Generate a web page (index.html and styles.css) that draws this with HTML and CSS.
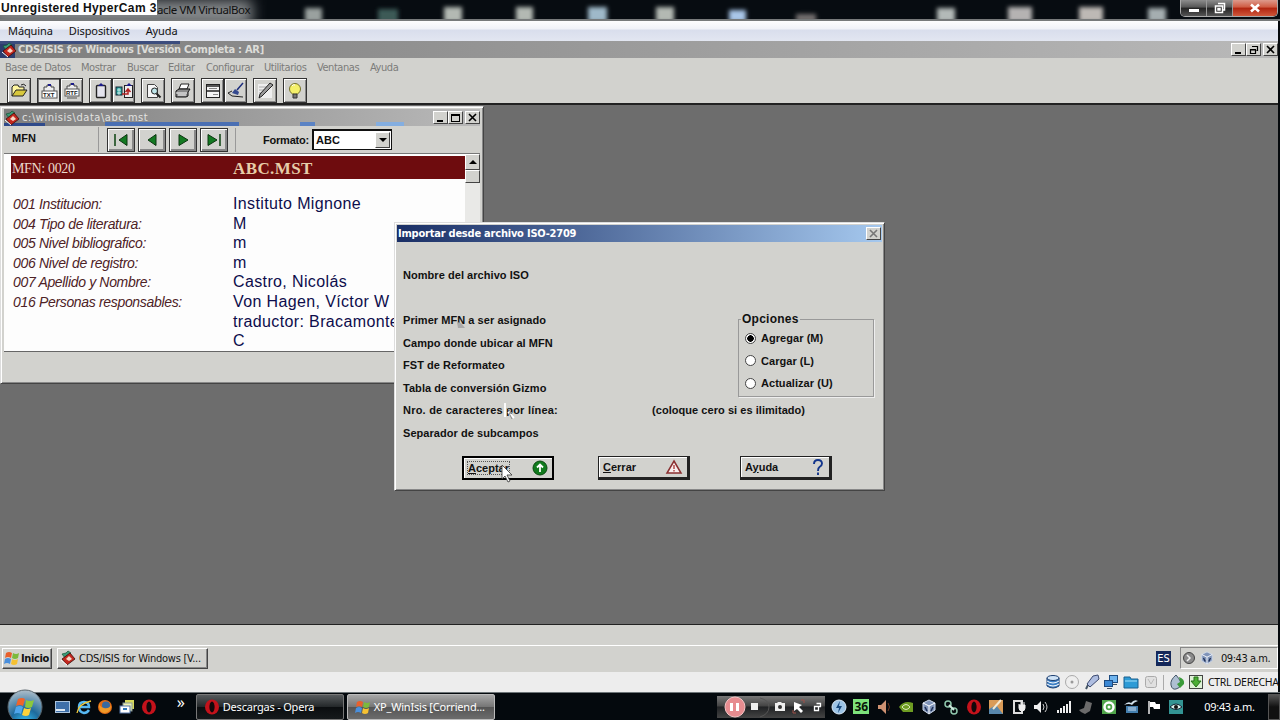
FILE: index.html
```
<!DOCTYPE html>
<html lang="es">
<head>
  <meta charset="UTF-8">
  <title>XP_WinIsis [Corriendo] - Oracle VM VirtualBox</title>
  <meta name="viewport" content="width=device-width, initial-scale=1.0">
  <link rel="stylesheet" href="styles.css">
</head>
<body>
  <!-- Shared icons -->
  <svg class="defs" width="0" height="0">
    <symbol id="isis" viewBox="0 0 16 16">
      <path d="M2 4l4-1 2-2 3 2-6 5z" fill="#3c9a78" stroke="#153" stroke-width=".7"/>
      <path d="M2 9l8-6 5 6-8 6z" fill="#c3281e" stroke="#3a0c0a" stroke-width=".8"/>
      <path d="M6 9l3-3 3 3-3 2z" fill="#f7d9c8"/>
      <path d="M1 10l6 5" fill="none" stroke="#fff"/>
    </symbol>
    <symbol id="flag" viewBox="0 0 16 16">
      <path d="M2 3q3-2 6 0L7 8Q4 6 1 8z" fill="#e8602c"/>
      <path d="M9 3q3 2 6 0l-1 5q-3 2-6 0z" fill="#7cba3c"/>
      <path d="M1 9q3-2 6 0l-1 5q-3-2-6 0z" fill="#4a8fdc"/>
      <path d="M8 9q3 2 6 0l-1 5q-3 2-6 0z" fill="#f5c132"/>
    </symbol>
    <symbol id="opera" viewBox="0 0 16 16">
      <ellipse cx="8" cy="8" rx="7" ry="7.5" fill="#c4121b"/>
      <ellipse cx="8" cy="8" rx="2.6" ry="5.4" fill="#12080a"/>
    </symbol>
    <symbol id="vbox" viewBox="0 0 16 16">
      <path d="M8 1l6 3v7l-6 4-6-4V4z" fill="#7f93b8" stroke="#cfd9ea"/>
      <path d="M2 4l6 3 6-3M8 7v8" fill="none" stroke="#fff"/>
      <path d="M4 8l2 4M12 8l-2 4" stroke="#1e2f55" stroke-width="1.5"/>
    </symbol>
    <symbol id="arrow" viewBox="0 0 12 19">
      <path d="M1 1v14l3-3 3 6 2-1-3-6h5z" fill="#fff" stroke="#333" stroke-width=".8"/>
    </symbol>
    <symbol id="cross" viewBox="0 0 9 9">
      <path d="M1 1l7 7M8 1L1 8" fill="none" stroke="currentColor" stroke-width="1.6"/>
    </symbol>
    <symbol id="restore" viewBox="0 0 10 10">
      <path d="M3.5 1.5h5v4h-1M3 1.5h6M1.5 4.5h5v4h-5zM1 5h6" fill="none" stroke="currentColor" stroke-width="1.2"/>
    </symbol>
  </svg>

  <div class="screen">
    <header class="host-title">
      <!-- desktop icons seen through the glass -->
      <svg class="glass" width="1280" height="20">
        <defs><filter id="soft" x="-50%" y="-50%" width="200%" height="200%"><feGaussianBlur stdDeviation="2"/></filter>
        <filter id="haze" x="-50%" y="-100%" width="200%" height="300%"><feGaussianBlur stdDeviation="7"/></filter></defs>
        <rect x="-10" y="0" width="262" height="26" fill="#85888a" filter="url(#haze)"/>
        <g filter="url(#soft)">
          <rect x="305" y="8" width="17" height="14" fill="#9aa19f"/>
          <rect x="378" y="9" width="20" height="14" fill="#3d5a57"/>
          <rect x="444" y="7" width="18" height="15" fill="#b3b9b3"/>
          <rect x="516" y="7" width="17" height="15" fill="#b3b9b3"/>
          <rect x="588" y="7" width="19" height="15" fill="#9fb9c9"/>
          <rect x="656" y="7" width="18" height="15" fill="#b3b9b3"/>
          <rect x="729" y="10" width="17" height="12" fill="#a9c6e8"/>
          <rect x="796" y="14" width="20" height="8" fill="#74706f"/>
          <rect x="937" y="8" width="18" height="14" fill="#b3bab8"/>
          <rect x="1008" y="7" width="24" height="15" fill="#b5b3b2"/>
          <rect x="1079" y="7" width="24" height="15" fill="#bdb9b5"/>
          <rect x="1148" y="8" width="18" height="14" fill="#a5aeb0"/>
        </g>
      </svg>
      <span class="hypercam">Unregistered HyperCam 3</span>
      <span class="host-name">acle VM VirtualBox</span>
      <div class="aero">
        <span class="aero-btn"><svg width="12" height="12"><path d="M1 7h10v3H1z" fill="#fff"/></svg></span>
        <span class="aero-btn"><svg width="12" height="12"><path d="M4 1.5h6.500v6.500H9M1.500 4h7v6.500h-7zM4 6.500h2v1.500H4z" fill="none" stroke="#fff" stroke-width="1.500"/></svg></span>
        <span class="aero-btn aero-close"><svg width="12" height="12"><path d="M2 2.500l8 7M10 2.500l-8 7" stroke="#fff" stroke-width="2.600"/></svg></span>
      </div>
    </header>

    <nav class="host-menu"><span>Máquina</span><span>Dispositivos</span><span>Ayuda</span></nav>

    <div class="vm">
      <div class="app-title">
        <svg width="16" height="16"><use href="#isis"/></svg>
        <span class="app-name">CDS/ISIS for Windows [Versión Completa : AR]</span>
        <div class="win-btns">
          <span class="wb"><i class="min"></i></span><span class="wb"><svg width="10" height="10"><use href="#restore"/></svg></span><span class="wb gap"><svg width="9" height="9"><use href="#cross"/></svg></span>
        </div>
      </div>
      <nav class="app-menu">
        <span class="m1">Base de Datos</span><span class="m2">Mostrar</span><span class="m3">Buscar</span><span class="m4">Editar</span><span class="m5">Configurar</span><span class="m6">Utilitarios</span><span class="m7">Ventanas</span><span class="m8">Ayuda</span>
      </nav>
      <div class="toolbar">
        <span class="tool">
          <svg width="18" height="18"><path d="M2 14V5l2-2h4l1 2h5v3" fill="#fff7a0" stroke="#222"/><path d="M2 14l4-6h11l-4 6z" fill="#d8c83c" stroke="#222"/><path d="M11 3q3-2 5 1" fill="none" stroke="#222"/></svg>
        </span>
        <div class="tool-group">
          <span class="tool on"><svg width="18" height="18"><path d="M4 9V5h3V3h4v2h3v4" fill="#eee" stroke="#444"/><rect x="8" y="2" width="3" height="2" fill="#1c1c8c"/><rect x="2" y="9" width="15" height="7" fill="#fff" stroke="#555"/><text x="3" y="15" class="tiny">TXT</text></svg></span>
          <span class="tool"><svg width="18" height="18"><path d="M4 7V4h3V2h4v2h3v3" fill="#eee" stroke="#444"/><rect x="8" y="1" width="3" height="2" fill="#1c1c8c"/><rect x="2" y="7" width="14" height="7" fill="#fff" stroke="#555"/><text x="3" y="13" class="tiny">RTF</text><path d="M4 16h10" stroke="#555"/></svg></span>
        </div>
        <div class="tool-group">
          <span class="tool"><svg width="18" height="18"><rect x="4.500" y="3.500" width="9" height="12" rx="1" fill="#e4e4ee" stroke="#222" stroke-width="1.400"/><path d="M6 4l3-3 3 3z" fill="#1c1c8c"/></svg></span>
          <span class="tool"><svg width="18" height="18"><rect x="9.500" y="3.500" width="8" height="12" fill="#eee" stroke="#222"/><path d="M11 4l3-3 3 3z" fill="#1c1c8c"/><rect x="1" y="5" width="6" height="8" fill="#2aa7a0" stroke="#123"/><path d="M2 8h4M2 11h4M4 6v7" stroke="#fff" stroke-width=".7"/><path d="M7 12h6V8M10.500 10l2.500-3 2.500 3" fill="none" stroke="#b02020" stroke-width="1.500"/></svg></span>
        </div>
        <span class="tool"><svg width="18" height="18"><path d="M3.500 2.500h7l3 3v10h-10z" fill="#f6f6f6" stroke="#444"/><circle cx="10.500" cy="9" r="3" fill="#bfe6ea" stroke="#222"/><path d="M12.500 11.500l4 4" stroke="#222" stroke-width="2"/></svg></span>
        <span class="tool"><svg width="18" height="18"><path d="M5 7l2-5h8l-2 5z" fill="#fff" stroke="#222"/><path d="M2 9l3-2h11l-2 3v4l-2 1H2z" fill="#8a8a8a" stroke="#111"/><path d="M2 11h11M4 13h8" stroke="#fff"/></svg></span>
        <div class="tool-group">
          <span class="tool"><svg width="18" height="18"><rect x="2.500" y="2.500" width="13" height="13" fill="#f4f4f4" stroke="#222"/><path d="M2 4h14M2 9h14" stroke="#222" stroke-width="1.500"/><path d="M5 6.500h8M9 12.500h5" stroke="#888"/></svg></span>
          <span class="tool"><svg width="18" height="18"><path d="M16 1l-6 7" stroke="#1c2c7c" stroke-width="1.500"/><path d="M8 7l4 3-1 3-6-2z" fill="#354a8e"/><path d="M1 11l4 3 11 1M1 11l4-2" fill="none" stroke="#222"/></svg></span>
        </div>
        <span class="tool"><svg width="18" height="18"><path d="M2 2h14v14H2z" fill="#eee"/><path d="M3 5h8M3 8h6M3 11h4" stroke="#aaa"/><path d="M3 16l1-4L14 1l3 2L6 14z" fill="#999" stroke="#222"/></svg></span>
        <span class="tool"><svg width="18" height="18"><circle cx="9" cy="7" r="5.500" fill="#f4f06a" stroke="#77742c"/><path d="M6 4q1-2 3-1" stroke="#fff" fill="none"/><path d="M7 12h4v4H7z" fill="#777" stroke="#333"/></svg></span>
      </div>

      <main class="workspace">
        <!-- Record window -->
        <section class="window record-win">
          <div class="record-title">
            <svg width="16" height="16"><use href="#isis"/></svg>
            <span>c:\winisis\data\abc.mst</span>
            <div class="win-btns">
              <span class="wb"><i class="min"></i></span><span class="wb"><i class="max"></i></span><span class="wb gap"><svg width="9" height="9"><use href="#cross"/></svg></span>
            </div>
          </div>
          <div class="record-bar">
            <span class="mfn">MFN</span>
            <div class="nav-btns">
              <span class="nav-btn"><svg width="16" height="14"><path d="M2 1v12" stroke="#174b1b" stroke-width="1.600"/><path d="M14 1.500v11L6 7z" fill="#137a22" stroke="#0c3510"/></svg></span>
              <span class="nav-btn"><svg width="16" height="14"><path d="M12 1.500v11L4 7z" fill="#137a22" stroke="#0c3510"/></svg></span>
              <span class="nav-btn"><svg width="16" height="14"><path d="M4 1.500v11L13 7z" fill="#137a22" stroke="#0c3510"/></svg></span>
              <span class="nav-btn"><svg width="16" height="14"><path d="M14 1v12" stroke="#174b1b" stroke-width="1.600"/><path d="M2 1.500v11L11 7z" fill="#137a22" stroke="#0c3510"/></svg></span>
            </div>
            <span class="format-label">Formato:</span>
            <div class="combo"><span>ABC</span><span class="combo-btn"><i class="down"></i></span></div>
          </div>
          <div class="record-body">
            <div class="record">
              <div class="record-head"><span>MFN: 0020</span><b>ABC.MST</b></div>
              <dl class="fields">
                <dt>001 Institucion:</dt><dd>Instituto Mignone</dd>
                <dt>004 Tipo de literatura:</dt><dd>M</dd>
                <dt>005 Nivel bibliografico:</dt><dd>m</dd>
                <dt>006 Nivel de registro:</dt><dd>m</dd>
                <dt>007 Apellido y Nombre:</dt><dd>Castro, Nicolás</dd>
                <dt>016 Personas responsables:</dt><dd>Von Hagen, Víctor W<br>traductor: Bracamonte,<br>C</dd>
              </dl>
            </div>
            <div class="scroll"><span class="scroll-btn"><i class="up"></i></span><span class="thumb"></span></div>
          </div>
        </section>

        <!-- Import dialog -->
        <section class="window dialog">
          <div class="dialog-title"><span>Importar desde archivo ISO-2709</span><span class="wb off"><svg width="9" height="9"><use href="#cross"/></svg></span></div>
          <form class="import">
            <label>Nombre del archivo ISO</label>
            <label>Primer MFN a ser asignado</label>
            <label>Campo donde ubicar al MFN</label>
            <label>FST de Reformateo</label>
            <label>Tabla de conversión Gizmo</label>
            <label class="chars">Nro. de caracteres por línea:</label>
            <span class="hint">(coloque cero si es ilimitado)</span>
            <label>Separador de subcampos</label>
            <fieldset class="options">
              <legend>Opciones</legend>
              <div class="option"><i class="radio checked"></i>Agregar (M)</div>
              <div class="option"><i class="radio"></i>Cargar (L)</div>
              <div class="option"><i class="radio"></i>Actualizar (U)</div>
            </fieldset>
          </form>
          <div class="actions">
            <span class="action default"><span class="focus"><u>A</u>ceptar</span><svg width="16" height="16"><circle cx="8" cy="8" r="7" fill="#117a1d" stroke="#0a4a10"/><path d="M8 12V5M5 7.500L8 4.500l3 3" fill="none" stroke="#fff" stroke-width="1.800"/></svg></span>
            <span class="action"><span><u>C</u>errar</span><svg width="18" height="16"><path d="M9 2l7 12H2z" fill="#f8eeee" stroke="#8a2f30" stroke-width="1.500"/><path d="M9 6v4M9 11v1.500" stroke="#a33" stroke-width="1.300"/></svg></span>
            <span class="action help"><span>A<u>y</u>uda</span><svg width="14" height="18"><path d="M3 6q0-4 4-4t4 3.500q0 2-2.500 3.500-1.500 1-1.500 4M7 14.500V17" fill="none" stroke="#12358c" stroke-width="1.900"/></svg></span>
          </div>
          <svg class="pointer" width="12" height="19"><use href="#arrow"/></svg>
          <svg class="ghost" width="12" height="17"><path d="M1 0v14M4 9l6 6" fill="none" stroke="#fff" stroke-width="1.800"/><path d="M3 5l5 5H5l3 6" fill="none" stroke="#8b8b8b"/></svg>
          <svg class="smudge" width="9" height="8"><path d="M0 1l4 1 4 5H1z" fill="#aaa"/></svg>
        </section>
      </main>

      <div class="app-status"></div>
      <div class="xp-bar">
        <span class="xp-btn start"><svg width="16" height="16"><use href="#flag"/></svg>Inicio</span>
        <span class="xp-btn task"><svg width="16" height="16"><use href="#isis"/></svg>CDS/ISIS for Windows [V...</span>
        <span class="lang">ES</span>
        <div class="xp-tray">
          <svg width="14" height="14"><circle cx="7" cy="7" r="5.500" fill="#8a8a8a" stroke="#444"/><path d="M5 4l3 3-3 3" fill="none" stroke="#eee" stroke-width="1.500"/></svg>
          <svg width="14" height="14"><use href="#vbox"/></svg>
          <span>09:43 a.m.</span>
        </div>
      </div>
    </div>

    <div class="vbox-status">
      <svg width="16" height="16"><path d="M2 4v8q6 4 12 0V4" fill="#3d7fc4" stroke="#1d3f70"/><ellipse cx="8" cy="4" rx="6" ry="2.500" fill="#cfe3f7" stroke="#1d3f70"/><path d="M2 7q6 4 12 0M2 10q6 4 12 0" fill="none" stroke="#fff"/></svg>
      <svg width="16" height="16"><circle cx="8" cy="8" r="6.500" fill="#eee" stroke="#aaa"/><circle cx="8" cy="8" r="1.500" fill="#999"/></svg>
      <svg width="16" height="16"><path d="M2 15l2-4" stroke="#456" stroke-width="2"/><path d="M3 10L9 2l5-1 1 4-9 8z" fill="#aebde0" stroke="#3c4a70"/></svg>
      <svg width="16" height="16"><rect x="6.500" y="1.500" width="8" height="7" fill="#6fb4ee" stroke="#1d4b80"/><rect x="1.500" y="6.500" width="8" height="6" fill="#3b88d4" stroke="#1d4b80"/><path d="M4 14.500h5M10 10.500h4" stroke="#456"/></svg>
      <svg width="16" height="16"><path d="M1 3h6l1 2h7v9H1z" fill="#2d9bd6" stroke="#1b618f"/><path d="M2 7h12" stroke="#a5e0f8"/></svg>
      <svg width="16" height="16"><rect x="2.500" y="2.500" width="11" height="11" rx="2" fill="#e0e0e0" stroke="#aaa"/><path d="M5 5l3 5 3-5" fill="none" stroke="#bbb"/></svg>
      <i class="sep"></i>
      <svg width="16" height="16"><path d="M7 1q6 7 5 10t-5 4-5-4T7 1z" fill="#aebfd2" stroke="#456"/><path d="M10 3q6 2 5 7l-4 4-3-4 3-2z" fill="#3b9b3a"/></svg>
      <svg width="16" height="16"><rect x="1.500" y="1.500" width="13" height="13" fill="#dff2d7" stroke="#444"/><path d="M6 3h4v4h3l-5 6-5-6h3z" fill="#4cae35" stroke="#27711b"/></svg>
      <span class="host-key">CTRL DERECHA</span>
    </div>

    <footer class="taskbar">
      <svg class="orb" width="36" height="30" viewBox="0 0 36 30">
        <defs><radialGradient id="orbfill" cx=".5" cy="1" r="1"><stop offset="0" stop-color="#35c8ff"/><stop offset=".45" stop-color="#1e6a9c"/><stop offset="1" stop-color="#b0bfca"/></radialGradient></defs>
        <circle cx="18" cy="18" r="17" fill="url(#orbfill)" stroke="#59656d"/>
        <path d="M11 10q4-2 7 0l-2 7q-3-2-7 0z" fill="#f0642a"/><path d="M19 11q4 2 8 0l-2 7q-4 2-7 0z" fill="#8cc83c"/><path d="M9 18q4-2 7 0l-2 7q-3-2-7 0z" fill="#4fa6ec"/><path d="M17 19q4 2 7 0l-2 7q-3 2-7 0z" fill="#fbd23c"/>
      </svg>
      <div class="quick">
        <svg width="16" height="16"><rect x="1.500" y="2.500" width="14" height="11" fill="#3e6fa8" stroke="#aac3dc"/><path d="M2 11h9" stroke="#dfe9f2" stroke-width="2"/></svg>
        <svg width="16" height="16"><path d="M13 11q-2 3-5 3-5-1-5-6t5-5q5 0 5 5H4" fill="none" stroke="#57b8f2" stroke-width="2.500"/><path d="M1 14Q2 5 15 2" fill="none" stroke="#f1c93b" stroke-width="1.300"/></svg>
        <svg width="16" height="16"><circle cx="8" cy="8" r="7" fill="#e26a14"/><circle cx="9" cy="6.500" r="4" fill="#39699f"/><path d="M2 3q0 5 5 6t7-3q0 8-7 8-6-1-5-11" fill="#f19a28"/></svg>
        <svg width="16" height="16"><rect x="6" y="1" width="9" height="9" fill="#d6d85a"/><rect x="4" y="4" width="9" height="8" fill="#eef0b4" stroke="#899"/><rect x="1" y="7" width="10" height="7" fill="#fff" stroke="#57a"/><path d="M4 10h4" stroke="#2b78b8" stroke-width="2"/></svg>
        <svg width="16" height="16"><use href="#opera"/></svg>
      </div>
      <span class="more">»</span>
      <span class="host-task"><svg width="16" height="16"><use href="#opera"/></svg>Descargas - Opera</span>
      <span class="host-task active"><svg width="16" height="16"><use href="#flag"/></svg>XP_WinIsis [Corriend...</span>
      <div class="recorder">
        <svg width="108" height="22">
          <circle cx="18" cy="11" r="10" fill="#e78c90" stroke="#f5c4c5"/><path d="M13 7h3v8h-3zM19 7h3v8h-3z" fill="#fff"/>
          <rect x="34" y="7" width="7" height="7" fill="#eee"/>
          <path d="M43 2q9 2 9 9t-9 10" fill="none" stroke="#555"/>
          <path d="M58 7h2l1-1h3l1 1h3v8H58z" fill="#eee"/><circle cx="63" cy="11" r="2" fill="#333"/>
          <path d="M77 6v9l3-2 4 4 2-2-4-4 3-2z" fill="#fff"/><path d="M76 14v3h3M84 4h3v3" fill="none" stroke="#a05048"/>
          <path d="M99.500 7.500h4v3h-2M97.500 10.500h4v4h-4z" fill="none" stroke="#fff" stroke-width="1.300"/>
        </svg>
      </div>
      <div class="tray">
        <svg width="16" height="16"><circle cx="8" cy="8" r="7" fill="#9cc3e6" stroke="#dceaf7"/><path d="M9 2L5 9h3l-1 5 4-7H8z" fill="#16477c"/></svg>
        <span class="counter">36</span>
        <svg width="16" height="16"><path d="M2 6h3l5-5v14l-5-5H2z" fill="#cf9272"/><path d="M12 4q3 4 0 8" stroke="#683520" fill="none"/></svg>
        <svg width="16" height="16"><path d="M1 8q5-7 14-4v9H5z" fill="#6e9c22"/><path d="M4 8q4-5 8 0-4 5-8 0" fill="none" stroke="#dbe8bb"/></svg>
        <svg width="16" height="16"><use href="#vbox"/></svg>
        <svg width="16" height="16"><circle cx="5" cy="5" r="3" fill="none" stroke="#8fc7ac" stroke-width="1.500"/><circle cx="11" cy="12" r="3" fill="none" stroke="#8fc7ac" stroke-width="1.500"/><path d="M6 6l5 5" stroke="#cde9dd" stroke-width="2"/></svg>
        <svg width="16" height="16"><use href="#opera"/></svg>
        <svg width="16" height="16"><path d="M1 1h14v14H1z" fill="#d99b58"/><path d="M1 10l7-4 7 9H1z" fill="#5887ac"/><path d="M5 10l8-9" stroke="#f3e7cf" stroke-width="2"/></svg>
        <svg width="16" height="16"><path d="M3 2h8v12H3z" fill="none" stroke="#ddd" stroke-width="2"/><path d="M8 5v4q0 3 3 3t3-3V6H8M10 3v3M13 3v3" fill="#eee" stroke="#eee"/></svg>
        <svg width="16" height="16"><path d="M1 6h3l4-4v12l-4-4H1z" fill="#eee"/><path d="M10 5q2 3 0 6M12 3q4 5 0 10" fill="none" stroke="#ccc"/></svg>
        <svg width="16" height="16"><path d="M1 11h2v3H1zM4 9h2v5H4zM7 7h2v7H7zM10 5h2v9h-2zM13 2h2v12h-2z" fill="#eee"/></svg>
        <svg width="16" height="16"><path d="M8 2l6 2-2 8-5 3-4-2-2-2 5-2z" fill="#6b6b6b"/></svg>
        <svg width="16" height="16"><rect x="1" y="1" width="14" height="14" fill="#50a54a"/><circle cx="8" cy="8" r="4.500" fill="none" stroke="#fff" stroke-width="2.500"/><circle cx="8" cy="8" r="1.500" fill="#fff"/></svg>
        <svg width="16" height="16"><path d="M3 7h12v7H3z" fill="#447fae"/><path d="M1 6q4-4 7-2 3-4 7-2-4 1-6 4Q6 4 1 6z" fill="#cfdfe9"/><path d="M5 9h8M5 11h8" stroke="#cde"/></svg>
        <svg width="16" height="16"><path d="M3 2v13" stroke="#eee" stroke-width="1.500"/><path d="M4 3h5l1 2h4v5H8L7 8H4z" fill="#fff"/></svg>
        <svg width="16" height="16"><rect x="1" y="1" width="14" height="14" fill="#339493"/><path d="M2 8q6-6 12 0-6 5-12 0z" fill="#d9f0ea" stroke="#123"/><circle cx="8" cy="8" r="2" fill="#111"/></svg>
      </div>
      <span class="clock">09:43 a.m.</span>
      <span class="peek"></span>
    </footer>
  </div>
</body>
</html>
```
FILE: styles.css
```
:root {
  --face: #d2d2ce; /* classic window face */
  --desk: #6d6d6d;
  --tahoma: "DejaVu Sans Condensed", "DejaVu Sans", sans-serif;
  --segoe: "Noto Sans", "Open Sans", sans-serif;
  --system: "Liberation Sans", Arial, sans-serif;
}

/* Reset */
* {
  margin: 0;
  padding: 0;
  box-sizing: border-box;
}

body {
  width: 1280px;
  height: 720px;
  overflow: hidden;
  background: #05090c;
  font-family: var(--tahoma);
  font-size: 11px;
  color: #111;
}
span, label, dt, dd {
  white-space: nowrap;
}
svg {
  display: block;
  flex-shrink: 0;
}
.defs {
  position: absolute;
}
.screen {
  height: 720px;
  display: flex;
  flex-direction: column;
}

/* Host window */
.host-title {
  position: relative;
  height: 21px;
  flex-shrink: 0;
  display: flex;
  align-items: flex-start;
  background: #070c11;
  border-bottom: 2px solid #777a7b;
  overflow: hidden;
}
.glass {
  position: absolute;
  left: 0;
  top: 0;
}
.hypercam {
  position: relative;
  width: 157px;
  height: 15px;
  padding-left: 1px;
  background: #fff;
  font: bold 12px/16px var(--system);
  letter-spacing: 0.36px;
}
.host-name {
  position: relative;
  font: 11.5px/20px var(--segoe);
  color: #101010;
  letter-spacing: -0.4px;
}
.aero {
  position: relative;
  margin-left: auto;
  margin-right: 2px;
  display: flex;
  height: 17px;
  border: 1px solid #aaa;
  border-top: none;
  border-radius: 0 0 5px 5px;
  overflow: hidden;
}
.aero-btn {
  width: 26px;
  display: flex;
  align-items: center;
  justify-content: center;
  background: linear-gradient(#8d8d8d, #555 45%, #222 50%, #555);
  border-right: 1px solid #999;
}
.aero-close {
  width: 44px;
  background: linear-gradient(#dd9a8c, #cf5a42 45%, #b02410 50%, #d0573a);
  border: none;
}
.host-menu {
  height: 20px;
  flex-shrink: 0;
  width: 1278px;
  padding-left: 8px;
  display: flex;
  gap: 16px;
  background: linear-gradient(#fdfdfe, #f0f2f8 40%, #d9deec 45%, #e2e6f1);
  font: 11px/20px var(--segoe);
  letter-spacing: -0.1px;
}

/* Guest screen */
.vm {
  width: 1278px;
  flex: 1;
  display: flex;
  flex-direction: column;
  background: var(--face);
}
.app-title {
  height: 17px;
  display: flex;
  align-items: center;
  padding-left: 1px;
  background:
    linear-gradient(#3c4d7d, #3c4d7d) 0 0 / 180px 3px no-repeat,
    linear-gradient(#2c3d6e, #2c3d6e) 0 0 / 15px 17px no-repeat,
    linear-gradient(90deg, #7e7e7e, #b9b9b9);
}
.app-name {
  margin-left: 1px;
  font-weight: bold;
  letter-spacing: -0.27px;
  color: #dcdcd8;
}
.win-btns {
  margin-left: auto;
  display: flex;
}
.wb {
  width: 15px;
  height: 13px;
  display: flex;
  align-items: center;
  justify-content: center;
  background: var(--face);
  border: 1px solid;
  border-color: #fff #444 #444 #fff;
  color: #000;
}
.wb.gap {
  margin-left: 2px;
}
.wb.off {
  color: #777;
}
.min {
  width: 6px;
  height: 2px;
  margin: 6px 2px 0 0;
  background: #000;
}
.max {
  width: 9px;
  height: 8px;
  border: 1px solid #000;
  border-top-width: 2px;
}
.app-menu {
  height: 20px;
  padding-left: 5px;
  display: flex;
  line-height: 19px;
  letter-spacing: -0.45px;
  color: #7c7c7a;
}
.m1 { width: 76px; }
.m2 { width: 46px; }
.m3 { width: 41px; }
.m4 { width: 38px; }
.m5 { width: 58px; }
.m6 { width: 53px; }
.m7 { width: 53px; }
.toolbar {
  height: 27px;
  padding-left: 7px;
  display: flex;
  align-items: flex-start;
  gap: 6px;
  border-bottom: 2px solid #222;
}
.tool-group {
  display: flex;
}
.tool {
  width: 24px;
  height: 25px;
  display: flex;
  align-items: center;
  justify-content: center;
  background: var(--face);
  border: 1px solid #333;
  box-shadow: inset 1px 1px #fff, inset -1px -1px #888;
}
.tool-group .tool {
  width: 23px;
}
.tool.on {
  background: #e2e2df;
  box-shadow: inset 1px 1px #777;
}
.tiny {
  font: bold 6px var(--system);
  fill: #222;
}

/* MDI area */
.workspace {
  position: relative;
  flex: 1;
  background: var(--desk);
}
.window {
  position: absolute;
  display: flex;
  flex-direction: column;
  background: var(--face);
  border: 1px solid;
  border-color: #ddd #444 #444 #ddd;
  box-shadow: inset 1px 1px #fff, inset -1px -1px #888;
}
.record-win {
  left: 0;
  top: 1px;
  width: 484px;
  height: 278px;
  padding: 2px 3px;
}
.record-title {
  height: 17px;
  display: flex;
  align-items: center;
  background:
    linear-gradient(#2f4a8a, #2f4a8a) 0 100% / 41px 3px no-repeat,
    linear-gradient(#4a6fb3, #4a6fb3) 101px 100% / 134px 4px no-repeat,
    linear-gradient(#5b83c4, #5b83c4) 296px 100% / 15px 4px no-repeat,
    linear-gradient(#84aee0, #84aee0) 372px 100% / 28px 4px no-repeat,
    linear-gradient(90deg, #7e7e7e, #b9b9b9);
  color: #e2e2e0;
}
.record-title > span {
  margin-left: 2px;
  letter-spacing: 0.55px;
}
.record-bar {
  height: 28px;
  display: flex;
  align-items: center;
  font: bold 11px var(--system);
  border-bottom: 1px solid #777;
}
.mfn {
  width: 95px;
  padding-left: 8px;
  height: 25px;
  line-height: 22px;
  border-right: 1px solid #999;
}
.nav-btns {
  display: flex;
  gap: 3px;
  padding: 0 7px 0 8px;
  border-right: 1px solid #999;
}
.nav-btn {
  width: 28px;
  height: 24px;
  display: flex;
  align-items: center;
  justify-content: center;
  border: 1px solid #333;
  box-shadow: inset 1px 1px #fff, inset -2px -2px #888;
}
.format-label {
  margin-left: 27px;
  width: 49px;
  letter-spacing: -0.2px;
}
.combo {
  width: 80px;
  height: 21px;
  display: flex;
  align-items: center;
  justify-content: space-between;
  padding: 1px 1px 1px 2px;
  background: #fff;
  border: 1px solid #111;
  border-width: 2px 1px 1px 2px;
}
.combo-btn, .scroll-btn, .thumb {
  width: 15px;
  height: 16px;
  display: flex;
  align-items: center;
  justify-content: center;
  background: var(--face);
  border: 1px solid;
  border-color: #fff #444 #444 #fff;
}
.thumb {
  height: 13px;
}
.up, .down {
  border: 4px solid transparent;
  border-top: 4px solid #000;
  border-bottom: none;
}
.up {
  border-top: none;
  border-bottom: 4px solid #000;
}
.record-body {
  height: 198px;
  display: flex;
  background: #fdfdfd;
  border-bottom: 1px solid #666;
}
.record {
  width: 462px;
  padding: 2px 0 0 7px;
  overflow: hidden;
}
.record-head {
  height: 23px;
  display: grid;
  grid-template-columns: 221px 1fr;
  align-items: center;
  background: #6e0c0e;
  color: #ecd9cc;
  font: 14px/23px "Liberation Serif", serif;
  letter-spacing: -0.35px;
  padding: 1px 0 0 1px;
}
.record-head b {
  font-size: 17px;
  letter-spacing: 0.4px;
  color: #e7cda9;
}
.fields {
  display: grid;
  grid-template-columns: 220px 1fr;
  padding: 15px 0 0 2px;
  line-height: 19.6px;
  font-family: var(--system);
}
.fields dt {
  padding-top: 1px;
  margin-bottom: -1px;
  font-size: 14px;
  font-style: italic;
  letter-spacing: -0.33px;
  color: #4d2226;
}
.fields dd {
  font-size: 16px;
  letter-spacing: 0.37px;
  color: #0d0d4c;
}
.scroll {
  width: 15px;
  background: #e9e9e7;
}

/* Import dialog */
.dialog {
  left: 394px;
  top: 117px;
  width: 491px;
  height: 269px;
  padding: 2px;
}
.dialog-title {
  height: 17px;
  display: flex;
  align-items: center;
  justify-content: space-between;
  padding: 0 1px;
  background: linear-gradient(90deg, #1a2f66, #a5c8ee);
  color: #fff;
  font-weight: bold;
  letter-spacing: -0.22px;
}
.import {
  display: grid;
  grid-template-columns: 249px 86px 136px;
  grid-template-rows: 45px repeat(5, 22.5px) 22.5px;
  padding: 22px 0 0 6px;
  font: bold 11px/22.5px var(--system);
  letter-spacing: 0.05px;
}
.import label {
  grid-column: 1;
}
.chars {
  letter-spacing: 0.22px;
}
.hint {
  grid-column: 2;
}
.options {
  grid-column: 3;
  grid-row: 2 / 6;
  height: 85px;
  margin-top: 3px;
  padding: 1px 0 0 6px;
  border: 1px solid #999;
  box-shadow: 1px 1px #eee;
}
.options legend {
  padding: 0 1px;
  margin-left: -4px;
  line-height: 14px;
  font-size: 12px;
  letter-spacing: 0.25px;
}
.option {
  display: flex;
  align-items: center;
  gap: 5px;
}
.radio {
  width: 11px;
  height: 11px;
  border-radius: 50%;
  background: #fff;
  border: 1px solid #444;
}
.radio.checked {
  background: radial-gradient(#000 3px, #fff 3.5px);
}
.actions {
  display: flex;
  gap: 44px;
  padding: 12px 0 0 65px;
}
.action {
  width: 92px;
  height: 24px;
  display: flex;
  align-items: center;
  justify-content: space-between;
  padding: 0 4px;
  font: bold 11px var(--system);
  border: 1px solid #222;
  border-width: 1px 3px 3px 1px;
  box-shadow: inset 1px 1px #fff;
}
.action.default {
  border-width: 2px;
  border-color: #000;
}
.action.help {
  margin-left: 6px;
}
.focus {
  outline: 1px dotted #555;
}
.pointer {
  position: absolute;
  left: 106px;
  top: 241px;
}
.ghost {
  position: absolute;
  left: 109px;
  top: 180px;
}
.smudge {
  position: absolute;
  left: 62px;
  top: 98px;
}

/* Guest status bar and taskbar */
.app-status {
  height: 21px;
  border-top: 1px solid #222;
}
.xp-bar {
  height: 27px;
  display: flex;
  align-items: center;
  padding: 0 0 2px 2px;
  border-top: 1px solid #fff;
}
.xp-btn {
  height: 21px;
  display: flex;
  align-items: center;
  gap: 1px;
  padding-left: 1px;
  border: 1px solid;
  border-color: #fff #444 #444 #fff;
  box-shadow: inset -1px -1px #888;
}
.start {
  width: 50px;
  font-weight: bold;
  letter-spacing: -0.35px;
}
.task {
  width: 151px;
  margin-left: 5px;
  padding-left: 2px;
  gap: 3px;
  letter-spacing: -0.25px;
}
.lang {
  margin-left: auto;
  width: 15px;
  height: 15px;
  background: #14285a;
  color: #fff;
  line-height: 15px;
  text-align: center;
}
.xp-tray {
  width: 98px;
  height: 22px;
  margin-left: 9px;
  display: flex;
  align-items: center;
  gap: 4px;
  padding-left: 1px;
  border: 1px solid;
  border-color: #888 #fff #fff #888;
}
.xp-tray span {
  margin-left: 3px;
  letter-spacing: -0.45px;
}
.vbox-status {
  width: 1278px;
  height: 20px;
  flex-shrink: 0;
  display: flex;
  align-items: center;
  justify-content: flex-end;
  gap: 3.6px;
  background: #ededed;
}
.sep {
  width: 1px;
  height: 15px;
  margin: 0 1px;
  background: #aaa;
}
.host-key {
  width: 70px;
  font: 10.5px var(--segoe);
  letter-spacing: -0.3px;
}

/* Host taskbar */
.taskbar {
  height: 28px;
  flex-shrink: 0;
  display: flex;
  align-items: center;
  background: #04090d;
  border-top: 1px solid #6d7477;
  color: #fff;
  font: 12px var(--segoe);
}
.orb {
  position: relative;
  margin: -5px 0 0 7px;
}
.quick {
  margin-left: 11px;
  display: flex;
  gap: 5.7px;
}
.more {
  margin: -10px 9px 0 20px;
  width: 10px;
  font-size: 16px;
}
.host-task {
  width: 148px;
  height: 26px;
  margin-right: 3px;
  display: flex;
  align-items: center;
  gap: 3px;
  padding-left: 7px;
  border: 1px solid #777;
  border-radius: 2px;
  background: linear-gradient(#565a5c, #25292b 48%, #0b0e10 52%, #15191b);
  font-size: 11px;
  letter-spacing: -0.2px;
}
.host-task.active {
  background: linear-gradient(#a7a7a7, #777 48%, #555 52%, #6c6c6c);
  border-color: #bbb;
}
.recorder {
  width: 108px;
  height: 22px;
  margin-left: 219px;
  background: linear-gradient(#777, #444 45%, #202224 50%, #444);
}
.tray {
  margin-left: 6px;
  display: flex;
  gap: 6.5px;
}
.counter {
  width: 16px;
  height: 15px;
  background: #7de27b;
  color: #071407;
  font: bold 12px/15px var(--segoe);
  text-align: center;
}
.clock {
  margin-left: 20px;
  font-size: 11px;
  letter-spacing: -0.3px;
}
.peek {
  margin-left: auto;
  width: 12px;
  height: 26px;
  border: 1px solid #555;
  background: linear-gradient(#555, #111 50%);
}
```
